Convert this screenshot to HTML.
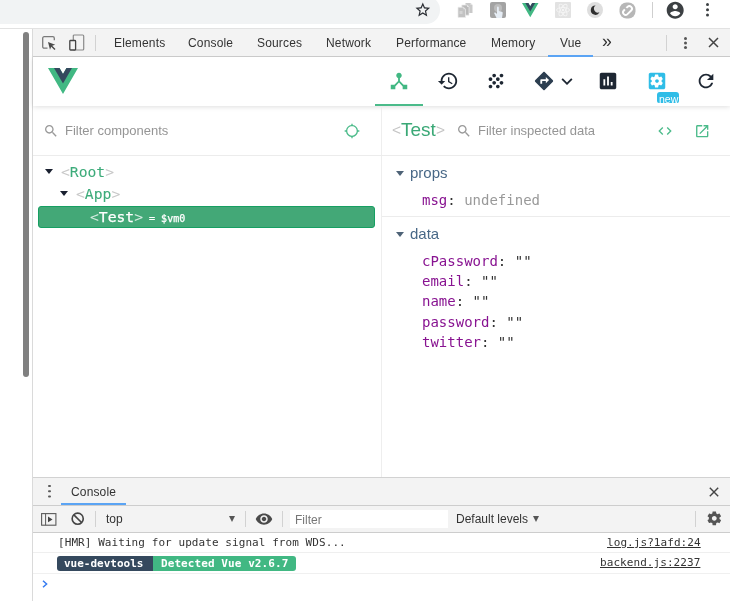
<!DOCTYPE html>
<html><head><meta charset="utf-8">
<style>
html,body{margin:0;padding:0;background:#fff;}
body{width:730px;height:601px;position:relative;overflow:hidden;font-family:"Liberation Sans",sans-serif;color:#333;}
.abs{position:absolute;}
.t{will-change:transform;}
.t{position:absolute;white-space:nowrap;line-height:1;}
.tab{letter-spacing:.16px;font-size:12px;color:#333;top:36.600px;}
.mono{font-family:"DejaVu Sans Mono","Liberation Mono",monospace;}
.key{color:#881391;}
svg{position:absolute;overflow:visible;}
.tri{position:absolute;width:0;height:0;border-left:4px solid transparent;border-right:4px solid transparent;border-top:5.500px solid #222;}
</style></head><body>
<!-- browser chrome top -->
<div class="abs" style="left:-20px;top:-4.300px;width:460.400px;height:28px;border-radius:14px;background:#f1f3f4;"></div>
<div class="abs" style="left:0;top:28px;width:730px;height:1px;background:#e2e2e2;"></div>
<!-- star -->
<svg style="left:413.500px;top:1.300px" width="17.600" height="17.600" viewBox="0 0 24 24"><path fill="#2a2d33" d="M22 9.240l-7.190-.620L12 2 9.190 8.630 2 9.240l5.460 4.730L5.820 21 12 17.270 18.180 21l-1.630-7.030L22 9.240zM12 15.400l-3.760 2.270 1-4.280-3.320-2.880 4.380-.38L12 6.100l1.710 4.040 4.380.38-3.320 2.880 1 4.280L12 15.400z"/></svg>
<!-- ext icon 1: copy pages -->
<svg style="left:458px;top:3px" width="15" height="15" viewBox="0 0 15 15"><path d="M7.500 0h5l2 2v8h-7z" fill="#c9c9c9"/><path d="M12.500 0v2h2z" fill="#e6e6e6"/><path d="M3.800 2h5.200l2 2v8.200H3.800z" fill="#b9b9b9" stroke="#ececec" stroke-width=".7"/><path d="M9 2v2h2z" fill="#e2e2e2"/><path d="M0 4.200h5.500l2 2V14.500H0z" fill="#c2c2c2" stroke="#ececec" stroke-width=".7"/><path d="M5.500 4.200v2h2z" fill="#e6e6e6"/><rect x="1.500" y="8" width="3" height="3" fill="#d4d4d4"/></svg>
<!-- ext icon 2: hand -->
<svg style="left:490px;top:2px" width="16" height="16" viewBox="0 0 16 16"><rect x="0" y="0" width="16" height="16" rx="2" fill="#a3a3a3"/><circle cx="8" cy="6" r="4" fill="#bcbcbc"/><path d="M7 5.500c0-1.200 1.800-1.200 1.800 0V9l3 .8c.8.200 1 .8.900 1.500L12 16H6.500L4.300 11.500c-.4-.9.700-1.500 1.400-.8L7 12z" fill="#e6edf5"/></svg>
<!-- ext icon 3: vue -->
<svg style="left:522px;top:3px" width="16.500" height="14.300" viewBox="0 0 261.760 226.690"><path d="M161.096.001l-30.225 52.351L100.647.001H-.005l130.877 226.688L261.749.001z" fill="#41b883"/><path d="M161.096.001l-30.225 52.351L100.647.001H52.346l78.526 136.010L209.398.001z" fill="#34495e"/></svg>
<!-- ext icon 4: react disabled -->
<svg style="left:555px;top:2px" width="16" height="16" viewBox="0 0 16 16"><rect width="16" height="16" rx="1" fill="#e2e2e2"/><g fill="none" stroke="#f4f4f4" stroke-width=".9"><ellipse cx="8" cy="8" rx="6.500" ry="2.500"/><ellipse cx="8" cy="8" rx="6.500" ry="2.500" transform="rotate(60 8 8)"/><ellipse cx="8" cy="8" rx="6.500" ry="2.500" transform="rotate(120 8 8)"/></g><circle cx="8" cy="8" r="1.200" fill="#f4f4f4"/></svg>
<!-- ext icon 5: moon -->
<svg style="left:587px;top:2px" width="16" height="16" viewBox="0 0 16 16"><circle cx="8" cy="8" r="8" fill="#dedede"/><path d="M8.600 3.600a4.600 4.600 0 1 0 3.900 6.700a3.900 3.900 0 0 1-3.900-6.700z" fill="#2e2e2e"/></svg>
<!-- ext icon 6: link -->
<svg style="left:619px;top:2px" width="17" height="17" viewBox="0 0 17 17"><rect x=".5" y=".5" width="16" height="16" rx="7" fill="#b7b7b7"/><g transform="rotate(-45 8.500 8.500)"><rect x="3.300" y="5.900" width="10.400" height="5.200" rx="2.600" fill="none" stroke="#fff" stroke-width="1.900"/><rect x="7.400" y="4.500" width="2.200" height="3" fill="#b7b7b7"/></g></svg>
<div class="abs" style="left:652px;top:2px;width:1px;height:16px;background:#cfcfcf;"></div>
<!-- profile -->
<svg style="left:665px;top:0px" width="20.400" height="20.400" viewBox="0 0 24 24"><path fill="#3c4043" d="M12 2C6.480 2 2 6.480 2 12s4.480 10 10 10 10-4.480 10-10S17.520 2 12 2zm0 3c1.660 0 3 1.340 3 3s-1.340 3-3 3-3-1.340-3-3 1.340-3 3-3zm0 14.200c-2.500 0-4.710-1.280-6-3.220.03-1.990 4-3.080 6-3.080 1.990 0 5.970 1.090 6 3.080-1.290 1.940-3.500 3.220-6 3.220z"/></svg>
<!-- menu dots -->
<div class="abs" style="left:706px;top:3px;width:3px;height:3px;border-radius:50%;background:#3c4043;box-shadow:0 5.300px 0 #3c4043,0 10.600px 0 #3c4043;"></div>

<!-- page scrollbar -->
<div class="abs" style="left:22.500px;top:32.300px;width:6.600px;height:344.700px;border-radius:3.300px;background:#808080;"></div>
<!-- devtools left border -->
<div class="abs" style="left:31.500px;top:29px;width:1.500px;height:572px;background:#dadada;"></div>
<!-- vue devtools header -->
<div class="abs" style="left:33px;top:57px;width:697px;height:48.500px;background:#fff;box-shadow:0 1px 5px rgba(0,0,0,.13);overflow:hidden;">
  <div class="abs" style="left:623.700px;top:34.600px;width:22.500px;height:11.700px;border-radius:3px 3px 2px 2px;background:#2fbde7;overflow:hidden;"><div class="t" style="left:2.600px;top:2.600px;font-size:10.500px;color:#fff;">new</div></div>
</div>
<!-- devtools toolbar -->
<div class="abs" style="left:33px;top:29px;width:697px;height:28px;background:#f3f3f3;border-bottom:1px solid #cacaca;box-sizing:border-box;"></div>
<!-- inspect icon -->
<svg style="left:42px;top:36px" width="14" height="14" viewBox="0 0 14 14"><path d="M5.500 12.200H2.200c-.9 0-1.500-.6-1.500-1.500V2.200c0-.9.600-1.500 1.500-1.500h8.600c.9 0 1.500.6 1.500 1.500v2" fill="none" stroke="#7a7a7a" stroke-width="1.300"/><path d="M6 6l7.200 2.700-3 1.100 3.300 3.300-1 1-3.300-3.300L8 13.700z" fill="#4a4a4a"/></svg>
<!-- device icon -->
<svg style="left:69px;top:34px" width="16" height="17" viewBox="0 0 16 17"><rect x="4.300" y="1" width="10.400" height="15" rx="1" fill="none" stroke="#8a8a8a" stroke-width="1.200"/><rect x=".8" y="6.500" width="5.800" height="9.500" rx=".8" fill="#f3f3f3" stroke="#444" stroke-width="1.300"/></svg>
<div class="abs" style="left:95px;top:35px;width:1.300px;height:16px;background:#d2d2d2;"></div>
<div class="t tab" style="left:114px;">Elements</div>
<div class="t tab" style="left:188px;">Console</div>
<div class="t tab" style="left:257px;">Sources</div>
<div class="t tab" style="left:326px;">Network</div>
<div class="t tab" style="left:396px;">Performance</div>
<div class="t tab" style="left:491px;">Memory</div>
<div class="t tab" style="left:560px;">Vue</div>
<div class="t" style="left:601.500px;top:32.500px;font-size:17.500px;color:#333;">»</div>
<div class="abs" style="left:548px;top:55px;width:45px;height:2px;background:#5ba4f4;"></div>
<div class="abs" style="left:666px;top:35px;width:1.300px;height:16px;background:#d2d2d2;"></div>
<div class="abs" style="left:684px;top:37px;width:3px;height:3px;border-radius:50%;background:#555;box-shadow:0 4.500px 0 #555,0 9px 0 #555;"></div>
<svg style="left:708px;top:37px" width="11" height="11" viewBox="0 0 11 11"><path d="M1 1l9 9M10 1l-9 9" stroke="#444" stroke-width="1.500" fill="none"/></svg>

<div class="abs" style="left:375px;top:103.500px;width:48px;height:2px;background:#4bbb8a;"></div>
<!-- vue logo -->
<svg style="left:48px;top:68px" width="30" height="26" viewBox="0 0 261.760 226.690"><path d="M161.096.001l-30.225 52.351L100.647.001H-.005l130.877 226.688L261.749.001z" fill="#41b883"/><path d="M161.096.001l-30.225 52.351L100.647.001H52.346l78.526 136.010L209.398.001z" fill="#34495e"/></svg>
<!-- header icons -->
<svg style="left:388px;top:70px" width="22" height="22" viewBox="0 0 24 24"><path fill="#42b883" d="M17 16l-4-4V8.820C14.160 8.400 15 7.300 15 6c0-1.660-1.340-3-3-3S9 4.340 9 6c0 1.300.84 2.400 2 2.820V12l-4 4H3v5h5v-3.050l4-4.200 4 4.200V21h5v-5h-4z"/></svg>
<svg style="left:437px;top:70px" width="22" height="22" viewBox="0 0 24 24"><path fill="#1e2733" d="M13 3c-4.970 0-9 4.030-9 9H1l3.890 3.890.07.140L9 12H6c0-3.870 3.130-7 7-7s7 3.130 7 7-3.130 7-7 7c-1.930 0-3.680-.79-4.940-2.060l-1.420 1.420C8.270 19.990 10.510 21 13 21c4.970 0 9-4.030 9-9s-4.030-9-9-9zm-1 5v5l4.280 2.540.72-1.210-3.500-2.080V8H12z"/></svg>
<svg style="left:485.400px;top:70.200px" width="22" height="22" viewBox="0 0 24 24"><path fill="#1e2733" d="M10 12c-1.100 0-2 .9-2 2s.9 2 2 2 2-.9 2-2-.9-2-2-2zM6 8c-1.100 0-2 .9-2 2s.9 2 2 2 2-.9 2-2-.9-2-2-2zm0 8c-1.100 0-2 .9-2 2s.9 2 2 2 2-.9 2-2-.9-2-2-2zm12-8c1.100 0 2-.9 2-2s-.9-2-2-2-2 .9-2 2 .9 2 2 2zm-4 8c-1.100 0-2 .9-2 2s.9 2 2 2 2-.9 2-2-.9-2-2-2zm4-4c-1.100 0-2 .9-2 2s.9 2 2 2 2-.9 2-2-.9-2-2-2zm-4-4c-1.100 0-2 .9-2 2s.9 2 2 2 2-.9 2-2-.9-2-2-2zm-4-4c-1.100 0-2 .9-2 2s.9 2 2 2 2-.9 2-2-.9-2-2-2z"/></svg>
<svg style="left:533px;top:70px" width="22" height="22" viewBox="0 0 24 24"><path fill="#2c3e50" d="M21.710 11.290l-9-9c-.39-.39-1.020-.39-1.410 0l-9 9c-.39.390-.39 1.020 0 1.410l9 9c.39.390 1.020.390 1.410 0l9-9c.39-.38.390-1.010 0-1.410zM14 14.500V12h-4v3H8v-4c0-.55.450-1 1-1h5V7.500l3.500 3.500-3.500 3.500z"/></svg>
<svg style="left:555.500px;top:70.500px" width="22" height="22" viewBox="0 0 24 24"><path fill="#1e2733" d="M7.410 7.840L12 12.420l4.590-4.580L18 9.250l-6 6-6-6z"/></svg>
<svg style="left:597px;top:70px" width="22" height="22" viewBox="0 0 24 24"><path fill="#1e2733" d="M19 3H5c-1.100 0-2 .9-2 2v14c0 1.100.9 2 2 2h14c1.100 0 2-.9 2-2V5c0-1.100-.9-2-2-2zM9 17H7v-7h2v7zm4 0h-2V7h2v10zm4 0h-2v-4h2v4z"/></svg>
<svg style="left:646px;top:70px" width="22" height="22" viewBox="0 0 24 24"><path fill="#2fbde7" d="M12 10c-1.100 0-2 .9-2 2s.9 2 2 2 2-.9 2-2-.9-2-2-2zm7-7H5c-1.110 0-2 .9-2 2v14c0 1.100.89 2 2 2h14c1.110 0 2-.9 2-2V5c0-1.100-.89-2-2-2zm-1.750 9c0 .23-.2.460-.5.680l1.480 1.160c.13.110.17.300.08.450l-1.400 2.420c-.9.150-.27.210-.43.150l-1.740-.70c-.36.280-.76.510-1.180.69l-.26 1.850c-.3.170-.18.300-.35.300h-2.800c-.17 0-.32-.13-.35-.29l-.26-1.850c-.43-.18-.82-.41-1.180-.69l-1.740.70c-.16.060-.34 0-.43-.15l-1.400-2.420c-.09-.15-.05-.34.080-.45l1.480-1.160c-.03-.23-.05-.46-.05-.69 0-.23.020-.46.050-.68l-1.480-1.160c-.13-.11-.17-.30-.08-.45l1.400-2.420c.09-.15.270-.21.430-.15l1.740.70c.36-.28.760-.51 1.180-.69l.26-1.850c.03-.17.180-.30.350-.30h2.800c.17 0 .32.130.35.290l.26 1.850c.43.180.82.410 1.180.69l1.740-.70c.16-.06.340 0 .43.150l1.400 2.420c.09.150.05.340-.08.450l-1.480 1.160c.3.230.5.460.5.690z"/></svg>
<svg style="left:695px;top:70px" width="22" height="22" viewBox="0 0 24 24"><path fill="#1e2733" d="M17.650 6.350C16.200 4.900 14.210 4 12 4c-4.420 0-7.990 3.580-7.990 8s3.570 8 7.990 8c3.730 0 6.840-2.550 7.730-6h-2.080c-.82 2.330-3.040 4-5.650 4-3.310 0-6-2.690-6-6s2.690-6 6-6c1.660 0 3.140.69 4.220 1.780L13 11h7V4l-2.350 2.350z"/></svg>

<!-- split border -->
<div class="abs" style="left:380.600px;top:106px;width:1.400px;height:371px;background:#eee;"></div>
<!-- action headers -->
<div class="abs" style="left:33px;top:155px;width:697px;height:1.200px;background:#ececec;"></div>
<svg style="left:43px;top:123px" width="16" height="16" viewBox="0 0 24 24"><path fill="#999" d="M15.500 14h-.79l-.28-.27C15.410 12.590 16 11.110 16 9.500 16 5.910 13.090 3 9.500 3S3 5.910 3 9.500 5.910 16 9.500 16c1.610 0 3.090-.59 4.230-1.570l.27.280v.79l5 4.990L20.490 19l-4.990-5zm-6 0C7.010 14 5 11.990 5 9.500S7.010 5 9.500 5 14 7.010 14 9.500 11.990 14 9.500 14z"/></svg>
<div class="t" style="left:65px;top:124px;font-size:13px;color:#959595;">Filter components</div>
<svg style="left:344.400px;top:123px" width="16" height="16" viewBox="0 0 24 24"><path fill="#4bbb8a" d="M20.940 11c-.46-4.170-3.770-7.480-7.940-7.940V1h-2v2.060C6.830 3.520 3.520 6.830 3.060 11H1v2h2.060c.46 4.170 3.770 7.480 7.940 7.940V23h2v-2.060c4.170-.46 7.480-3.770 7.940-7.940H23v-2h-2.060zM12 19c-3.870 0-7-3.130-7-7s3.130-7 7-7 7 3.130 7 7-3.130 7-7 7z"/></svg>
<div class="t" style="left:391.500px;top:122px;font-size:15.500px;color:#c4c4c4;">&lt;</div>
<div class="t" style="left:400.500px;top:120px;font-size:19px;color:#3aa876;">Test</div>
<div class="t" style="left:436.200px;top:122px;font-size:15.500px;color:#c4c4c4;">&gt;</div>
<svg style="left:456px;top:123px" width="16" height="16" viewBox="0 0 24 24"><path fill="#999" d="M15.500 14h-.79l-.28-.27C15.410 12.590 16 11.110 16 9.500 16 5.910 13.090 3 9.500 3S3 5.910 3 9.500 5.910 16 9.500 16c1.610 0 3.090-.59 4.230-1.570l.27.280v.79l5 4.990L20.490 19l-4.990-5zm-6 0C7.010 14 5 11.990 5 9.500S7.010 5 9.500 5 14 7.010 14 9.500 11.990 14 9.500 14z"/></svg>
<div class="t" style="left:478px;top:124px;font-size:13px;color:#959595;">Filter inspected data</div>
<svg style="left:657px;top:123px" width="16" height="16" viewBox="0 0 24 24"><path fill="#4bbb8a" d="M9.400 16.600L4.800 12l4.600-4.600L8 6l-6 6 6 6 1.400-1.400zm5.200 0l4.600-4.600-4.600-4.600L16 6l6 6-6 6-1.400-1.400z"/></svg>
<svg style="left:693.500px;top:122.900px" width="16.400" height="16.400" viewBox="0 0 24 24"><path fill="#4bbb8a" d="M19 19H5V5h7V3H5c-1.110 0-2 .9-2 2v14c0 1.100.89 2 2 2h14c1.100 0 2-.9 2-2v-7h-2v7zM14 3v2h3.590l-9.830 9.830 1.410 1.410L19 6.410V10h2V3h-7z"/></svg>

<!-- tree -->
<div class="t mono" style="left:60.500px;top:164.800px;font-size:14.700px;color:#3dab7a;-webkit-text-stroke:.08px #3dab7a;"><span style="color:#c8c8c8;-webkit-text-stroke:0">&lt;</span>Root<span style="color:#c8c8c8;-webkit-text-stroke:0">&gt;</span></div>
<div class="t mono" style="left:75.700px;top:187.300px;font-size:14.700px;color:#3dab7a;-webkit-text-stroke:.08px #3dab7a;"><span style="color:#c8c8c8;-webkit-text-stroke:0">&lt;</span>App<span style="color:#c8c8c8;-webkit-text-stroke:0">&gt;</span></div>
<div class="abs" style="left:37.600px;top:206.200px;width:337.800px;height:21.700px;background:#43a877;border:1px solid #169f62;box-sizing:border-box;border-radius:3px;"></div>
<div class="t mono" style="left:90px;top:209.500px;font-size:14.700px;color:#fff;-webkit-text-stroke:.25px #fff;"><span style="color:#d4ebe0;-webkit-text-stroke:0">&lt;</span>Test<span style="color:#d4ebe0;-webkit-text-stroke:0">&gt;</span><span style="font-size:10px;"> = $vm0</span></div>
<div class="tri" style="left:44.700px;top:169px;border-top-color:#1a2030"></div>
<div class="tri" style="left:60.200px;top:191px;border-top-color:#1a2030"></div>

<!-- right data -->
<div class="tri" style="left:395.500px;top:170.800px;border-top-color:#4e6377;"></div>
<div class="t" style="left:410px;top:165px;font-size:15px;color:#486887;">props</div>
<div class="t mono" style="left:422px;top:193px;font-size:14px;color:#333;"><span class="key">msg</span>: <span style="color:#999">undefined</span></div>
<div class="abs" style="left:382px;top:216px;width:348px;height:1.200px;background:#ececec;"></div>
<div class="tri" style="left:395.500px;top:231.800px;border-top-color:#4e6377;"></div>
<div class="t" style="left:410px;top:226px;font-size:15px;color:#486887;">data</div>
<div class="t mono" style="left:422px;top:254px;font-size:14px;color:#333;"><span class="key">cPassword</span>: ""</div>
<div class="t mono" style="left:422px;top:274px;font-size:14px;color:#333;"><span class="key">email</span>: ""</div>
<div class="t mono" style="left:422px;top:294px;font-size:14px;color:#333;"><span class="key">name</span>: ""</div>
<div class="t mono" style="left:422px;top:315px;font-size:14px;color:#333;"><span class="key">password</span>: ""</div>
<div class="t mono" style="left:422px;top:335px;font-size:14px;color:#333;"><span class="key">twitter</span>: ""</div>

<!-- console drawer -->
<div class="abs" style="left:33px;top:477px;width:697px;height:29px;background:#f3f3f3;border-top:1px solid #d2d2d2;border-bottom:1px solid #cdcdcd;box-sizing:border-box;"></div>
<div class="abs" style="left:48px;top:484.800px;width:2.600px;height:2.600px;border-radius:50%;background:#5a5a5a;box-shadow:0 5.300px 0 #5a5a5a,0 10.600px 0 #5a5a5a;"></div>
<div class="t" style="left:70.500px;top:485.700px;font-size:12px;letter-spacing:.15px;color:#333;">Console</div>
<div class="abs" style="left:61px;top:503.300px;width:65px;height:2px;background:#5ba4f4;"></div>
<svg style="left:709px;top:487.400px" width="10" height="10" viewBox="0 0 10 10"><path d="M.8.800l8.400 8.400M9.200.800L.8 9.200" stroke="#444" stroke-width="1.400" fill="none"/></svg>
<div class="abs" style="left:33px;top:506px;width:697px;height:27px;background:#f3f3f3;border-bottom:1px solid #cdcdcd;box-sizing:border-box;"></div>
<!-- sidebar toggle icon -->
<svg style="left:40.700px;top:513px" width="16" height="13" viewBox="0 0 16 13"><rect x=".6" y=".6" width="14.300" height="11.600" fill="none" stroke="#5a5a5a" stroke-width="1.100"/><path d="M4.600 .6v11.600" stroke="#5a5a5a" stroke-width="1"/><path d="M7 3.600l4.500 2.800-4.500 2.800z" fill="#444"/></svg>
<!-- clear icon -->
<svg style="left:70.900px;top:512.400px" width="13.400" height="13.400" viewBox="0 0 14 14"><circle cx="7" cy="7" r="5.800" fill="none" stroke="#444" stroke-width="1.700"/><path d="M3 3l8 8" stroke="#444" stroke-width="1.700"/></svg>
<div class="abs" style="left:95px;top:511px;width:1.300px;height:16px;background:#d2d2d2;"></div>
<div class="t" style="left:106px;top:513px;font-size:12px;color:#333;">top</div>
<div class="tri" style="left:229px;top:516px;border-top-color:#555;border-left-width:3.300px;border-right-width:3.300px;border-top-width:6px"></div>
<div class="abs" style="left:245px;top:511px;width:1.300px;height:16px;background:#d2d2d2;"></div>
<!-- eye -->
<svg style="left:255px;top:510px" width="18" height="18" viewBox="0 0 24 24"><path fill="#4a4a4a" d="M12 4.500C7 4.500 2.730 7.610 1 12c1.730 4.390 6 7.500 11 7.500s9.270-3.110 11-7.500c-1.730-4.390-6-7.500-11-7.500zM12 17c-2.760 0-5-2.240-5-5s2.240-5 5-5 5 2.240 5 5-2.240 5-5 5zm0-8c-1.660 0-3 1.340-3 3s1.340 3 3 3 3-1.340 3-3-1.340-3-3-3z"/></svg>
<div class="abs" style="left:282px;top:511px;width:1.300px;height:16px;background:#d2d2d2;"></div>
<div class="abs" style="left:290px;top:510px;width:158px;height:18px;background:#fff;"></div>
<div class="t" style="left:295px;top:514px;font-size:12px;color:#777;">Filter</div>
<div class="t" style="left:456px;top:513px;font-size:12px;color:#333;">Default levels</div>
<div class="tri" style="left:533px;top:516px;border-top-color:#555;border-left-width:3.300px;border-right-width:3.300px;border-top-width:6px"></div>
<div class="abs" style="left:695px;top:511px;width:1.300px;height:16px;background:#d2d2d2;"></div>
<!-- gear -->
<svg style="left:705.700px;top:510.300px" width="16.600" height="16.600" viewBox="0 0 24 24"><path fill="#555" d="M19.430 12.980c.04-.32.070-.64.070-.98s-.03-.66-.07-.98l2.110-1.650c.19-.15.240-.42.120-.64l-2-3.460c-.12-.22-.39-.30-.61-.22l-2.490 1c-.52-.40-1.080-.73-1.690-.98l-.38-2.650C14.460 2.180 14.250 2 14 2h-4c-.25 0-.46.180-.49.420l-.38 2.650c-.61.250-1.170.59-1.690.98l-2.490-1c-.23-.09-.49 0-.61.220l-2 3.460c-.13.220-.07.490.12.640l2.110 1.650c-.4.320-.7.650-.7.980s.3.660.7.980l-2.110 1.650c-.19.150-.24.420-.12.640l2 3.460c.12.220.39.300.61.220l2.490-1c.52.400 1.080.73 1.690.98l.38 2.650c.3.240.24.420.49.420h4c.25 0 .46-.18.490-.42l.38-2.650c.61-.25 1.170-.59 1.690-.98l2.490 1c.23.090.49 0 .61-.22l2-3.460c.12-.22.070-.49-.12-.64l-2.110-1.650zM12 15.500c-1.930 0-3.500-1.570-3.500-3.500s1.570-3.500 3.500-3.500 3.500 1.570 3.500 3.500-1.570 3.500-3.500 3.500z"/></svg>

<!-- console messages -->
<div class="t mono" style="left:57.800px;top:537.400px;font-size:11px;letter-spacing:.07px;color:#333;">[HMR] Waiting for update signal from WDS...</div>
<div class="t mono" style="left:607px;top:537.400px;font-size:11px;letter-spacing:.07px;color:#333;text-decoration:underline;">log.js?1afd:24</div>
<div class="abs" style="left:33px;top:551.700px;width:697px;height:1px;background:#efefef;"></div>
<div class="abs" style="left:57px;top:556.300px;width:96px;height:14.700px;background:#35495e;border-radius:3px 0 0 3px;"></div>
<div class="abs" style="left:153px;top:556.300px;width:143px;height:14.700px;background:#41b883;border-radius:0 3px 3px 0;"></div>
<div class="t mono" style="left:64.300px;top:557.900px;font-size:11px;color:#fff;font-weight:bold;">vue-devtools</div>
<div class="t mono" style="left:160.700px;top:557.900px;letter-spacing:.08px;font-size:11px;color:#fff;font-weight:bold;">Detected Vue v2.6.7</div>
<div class="t mono" style="left:600px;top:557px;font-size:11px;letter-spacing:.07px;color:#333;text-decoration:underline;">backend.js:2237</div>
<div class="abs" style="left:33px;top:573px;width:697px;height:1px;background:#f0f0f0;"></div>
<svg style="left:42px;top:580px" width="6" height="8" viewBox="0 0 6 8"><path d="M1 .8l3.600 3.200L1 7.200" fill="none" stroke="#367cf1" stroke-width="1.500"/></svg>
</body></html>
